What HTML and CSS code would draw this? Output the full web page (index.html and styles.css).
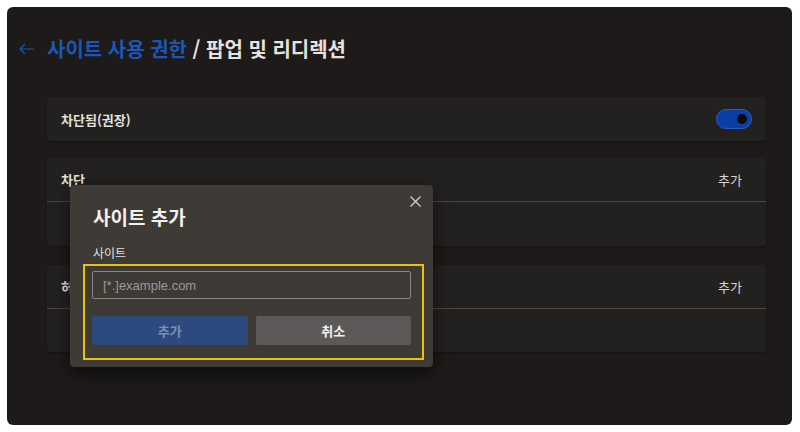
FILE: index.html
```html
<!DOCTYPE html>
<html lang="ko">
<head>
<meta charset="utf-8">
<link rel="stylesheet" href="styles.css">
</head>
<body>
<div class="panel">
  <div class="header">
    <svg class="back" width="16" height="12" viewBox="0 0 16 12"><path d="M6 1 L1 6 L6 11 M1 6 H15" fill="none" stroke="#1a57b8" stroke-width="1.2"/></svg>
    <h1 class="title"><span class="crumb">사이트 사용 권한</span> / 팝업 및 리디렉션</h1>
  </div>
  <div class="card row first">
    <span class="label">차단됨(권장)</span>
    <span class="toggle"><span class="knob"></span></span>
  </div>
  <div class="card second">
    <div class="row head"><span class="label">차단</span><span class="add">추가</span></div>
    <div class="row empty"></div>
  </div>
  <div class="card third">
    <div class="row head"><span class="label">허용</span><span class="add">추가</span></div>
    <div class="row empty short"></div>
  </div>

  <div class="dialog">
    <svg class="close" width="11" height="11" viewBox="0 0 11 11"><path d="M0.5 0.5 L10.5 10.5 M10.5 0.5 L0.5 10.5" stroke="#d8d4d0" stroke-width="1.2"/></svg>
    <h2 class="dtitle">사이트 추가</h2>
    <div class="flabel">사이트</div>
    <div class="focus">
      <div class="input">[*.]example.com</div>
      <div class="buttons">
        <button class="btn primary">추가</button>
        <button class="btn secondary">취소</button>
      </div>
    </div>
  </div>
</div>
</body>
</html>
```
FILE: styles.css
```css
html, body {
  margin: 0;
  padding: 0;
  background: #ffffff;
}
body {
  width: 800px;
  height: 432px;
  overflow: hidden;
  font-family: "Noto Sans CJK KR", "Noto Sans", sans-serif;
}
.panel {
  position: relative;
  box-sizing: border-box;
  margin: 7px 8px 0 7px;
  height: 418px;
  background: #1d1a19;
  border-radius: 6px;
  padding: 0 26px 0 40px;
  display: flex;
  flex-direction: column;
}
.header {
  display: flex;
  align-items: center;
  height: 82px;
  margin-left: -28px;
}
.back {
  margin-right: 12px;
  margin-top: 1px;
}
.title {
  margin: 0;
  font-size: 20px;
  font-weight: 700;
  color: #e6e2de;
}
.crumb {
  color: #1a57b8;
}
.card {
  background: #232020;
  border-radius: 4px;
  box-shadow: 0 1px 2px rgba(0,0,0,0.3);
}
.first { margin-top: 8px; margin-bottom: 17px; }
.second { margin-bottom: 19px; }
.row {
  display: flex;
  align-items: center;
  justify-content: space-between;
  height: 44px;
  padding: 0 14px;
  box-sizing: border-box;
}
.head {
  border-bottom: 1px solid #4a4644;
}
.empty { height: 44px; }
.short { height: 43px; }
.label {
  color: #e4e0dc;
  font-size: 13px;
  font-weight: 700;
}
.add {
  color: #d8d4d0;
  font-size: 13px;
  margin-right: 10px;
}
.toggle {
  width: 36px;
  height: 20px;
  box-sizing: border-box;
  border-radius: 10px;
  background: #0a3fa6;
  border: 1px solid #2a5bc0;
  display: flex;
  align-items: center;
  justify-content: flex-end;
  padding-right: 4px;
}
.knob {
  width: 10px;
  height: 10px;
  border-radius: 50%;
  background: #0a0a0a;
}
.dialog {
  position: absolute;
  left: 63px;
  top: 178px;
  width: 363px;
  height: 182px;
  box-sizing: border-box;
  background: #3e3a36;
  border-radius: 4px;
  box-shadow: 0 6px 18px rgba(0,0,0,0.55);
  padding: 18px 9px 0 13px;
}
.close {
  position: absolute;
  right: 12px;
  top: 11px;
}
.dtitle {
  margin: 0 0 0 10px;
  font-size: 19px;
  font-weight: 700;
  color: #f2efec;
  line-height: 28px;
}
.flabel {
  margin: 14px 0 0 10px;
  font-size: 12px;
  color: #e4e0dc;
  line-height: 16px;
}
.focus {
  margin-top: 3px;
  border: 2px solid #e8c30a;
  padding: 5px 11px 13px 7px;
}
.input {
  height: 28px;
  box-sizing: border-box;
  border: 1px solid #8a8681;
  border-radius: 2px;
  padding: 0 10px;
  display: flex;
  align-items: center;
  font-family: "Liberation Sans", sans-serif;
  font-size: 13px;
  color: #9d9995;
}
.buttons {
  display: flex;
  gap: 8px;
  margin-top: 17px;
}
.btn {
  flex: 1;
  height: 29px;
  border: none;
  border-radius: 2px;
  font-family: "Noto Sans CJK KR", sans-serif;
  font-size: 13px;
  font-weight: 700;
}
.primary {
  background: #2c4a7e;
  color: #7f8fae;
}
.secondary {
  background: #5d5958;
  color: #f4f1ee;
}
```
